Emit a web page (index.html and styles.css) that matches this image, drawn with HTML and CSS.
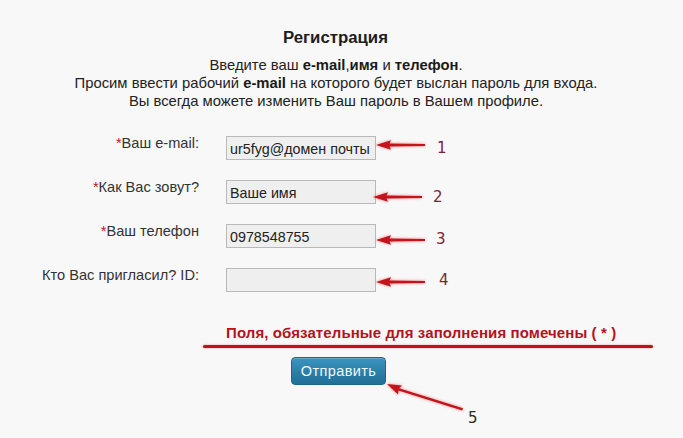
FILE: index.html
```html
<!DOCTYPE html>
<html lang="ru">
<head>
<meta charset="utf-8">
<title>Регистрация</title>
<link rel="stylesheet" href="styles.css">
</head>
<body>
<div class="page">
  <h1 class="title">Регистрация</h1>
  <p class="intro">Введите ваш <b>e-mail</b>,<b>имя</b> и <b>телефон</b>.<br>
  Просим ввести рабочий <b>e-mail</b> на которого будет выслан пароль для входа.<br>
  Вы всегда можете изменить Ваш пароль в Вашем профиле.</p>

  <form class="form">
    <div class="row">
      <label class="lbl"><span class="req">*</span>Ваш e-mail:</label>
      <input class="field" type="text" value="ur5fyg@домен почты">
      <div class="note n1">
        <svg class="arrow" viewBox="0 0 50 12" width="50" height="12"><path d="M0 6 L15 1.2 L13.5 4.6 L49 4.9 L49 7.1 L13.5 7.4 L15 10.8 Z"/></svg>
        <span class="num">1</span>
      </div>
    </div>
    <div class="row">
      <label class="lbl"><span class="req">*</span>Как Вас зовут?</label>
      <input class="field" type="text" value="Ваше имя">
      <div class="note n2">
        <svg class="arrow" viewBox="0 0 50 12" width="50" height="12"><path d="M0 6 L15 1.2 L13.5 4.6 L49 4.9 L49 7.1 L13.5 7.4 L15 10.8 Z"/></svg>
        <span class="num">2</span>
      </div>
    </div>
    <div class="row">
      <label class="lbl"><span class="req">*</span>Ваш телефон</label>
      <input class="field" type="text" value="0978548755">
      <div class="note n3">
        <svg class="arrow" viewBox="0 0 50 12" width="50" height="12"><path d="M0 6 L15 1.2 L13.5 4.6 L49 4.9 L49 7.1 L13.5 7.4 L15 10.8 Z"/></svg>
        <span class="num">3</span>
      </div>
    </div>
    <div class="row">
      <label class="lbl">Кто Вас пригласил? ID:</label>
      <input class="field" type="text" value="">
      <div class="note n4">
        <svg class="arrow" viewBox="0 0 50 12" width="50" height="12"><path d="M0 6 L15 1.2 L13.5 4.6 L49 4.9 L49 7.1 L13.5 7.4 L15 10.8 Z"/></svg>
        <span class="num">4</span>
      </div>
    </div>
  </form>

  <p class="required">Поля, обязательные для заполнения помечены ( * )</p>
  <div class="rule"></div>

  <div class="submit-row">
    <button class="btn" type="button">Отправить</button>
    <div class="pointer">
      <svg class="arrow5" viewBox="0 0 80 30" width="80" height="30"><path d="M0 1 L15 2.5 L12.2 5.3 L76 25.2 L75.2 27.4 L11.4 7.6 L11 11.4 Z"/></svg>
      <span class="num num5">5</span>
    </div>
  </div>
</div>
</body>
</html>
```

FILE: styles.css
```css
html, body {
  margin: 0;
  padding: 0;
}

body {
  background: #f8f8f8;
  font-family: "Liberation Sans", Arial, sans-serif;
  color: #222;
  width: 683px;
  height: 438px;
  overflow: hidden;
}

.page {
  padding-top: 28px;
}

.title {
  margin: 0;
  padding-right: 12px;
  font-size: 16.8px;
  line-height: 20px;
  font-weight: bold;
  text-align: center;
  color: #1e1e1e;
}

.intro {
  margin: 8px 0 0;
  padding-right: 11px;
  font-size: 14.8px;
  line-height: 18px;
  text-align: center;
  color: #222;
}

.intro b {
  color: #1a1a1a;
}

.form {
  margin: 26px 0 0;
  display: grid;
  row-gap: 20px;
}

.row {
  display: grid;
  grid-template-columns: 226px 150px auto;
  height: 24px;
}

.lbl {
  align-self: start;
  margin-top: -1px;
  padding-right: 27px;
  text-align: right;
  font-size: 14.6px;
  line-height: 16px;
  color: #333;
  white-space: nowrap;
}

.req {
  color: #c0141c;
}

.field {
  box-sizing: border-box;
  width: 150px;
  height: 24px;
  margin: 0;
  padding: 2px 3px 0;
  border: 1px solid #b9b9b9;
  background: #efefef;
  font-family: "Liberation Sans", Arial, sans-serif;
  font-size: 14.3px;
  color: #222;
  outline: none;
}

.note {
  display: flex;
  align-items: flex-start;
}

.arrow {
  display: block;
  fill: #c3141c;
  filter: drop-shadow(0 0 1.5px rgba(230, 30, 30, 0.55));
}

.num {
  font-family: "DejaVu Sans", "Liberation Sans", sans-serif;
  font-size: 15px;
  line-height: 16px;
  color: #7a2436;
  margin-left: 14px;
}

.n1 .arrow { margin-top: 3px; }
.n1 .num { margin-top: 4px; margin-left: 11px; }
.n2 .arrow { margin-top: 11px; margin-left: -3px; }
.n2 .num { margin-top: 9px; margin-left: 10px; }
.n3 .arrow { margin-top: 10px; }
.n3 .num { margin-top: 7px; margin-left: 10px; }
.n4 .arrow { margin-top: 8px; }
.n4 .num { margin-top: 4px; margin-left: 13px; }

.required {
  margin: 33px 0 0 226px;
  font-size: 15px;
  line-height: 16px;
  font-weight: bold;
  color: #b4121c;
  white-space: nowrap;
  letter-spacing: 0.1px;
}

.rule {
  margin: 4px 0 0 203px;
  width: 450px;
  height: 3px;
  border-radius: 2px;
  background: #c0141c;
  box-shadow: 0 0 2px rgba(220, 30, 30, 0.5);
}

.submit-row {
  position: relative;
  margin-top: 9px;
  padding-left: 291px;
}

.btn {
  display: block;
  box-sizing: border-box;
  width: 95px;
  height: 28px;
  margin: 0;
  padding: 0;
  border: 1px solid #1f6688;
  border-radius: 4px;
  background: linear-gradient(#3b95c1, #2b7ea8 55%, #236f96);
  box-shadow: inset 0 1px 0 rgba(255, 255, 255, 0.2);
  font-family: "Liberation Sans", Arial, sans-serif;
  font-size: 14.5px;
  color: #f2f8fb;
  letter-spacing: 0.4px;
}

.pointer {
  position: absolute;
  left: 387px;
  top: 26px;
  width: 100px;
  height: 50px;
}

.arrow5 {
  display: block;
  fill: #c3141c;
  filter: drop-shadow(0 0 1.5px rgba(230, 30, 30, 0.55));
}

.num5 {
  position: absolute;
  left: 81px;
  top: 27px;
  margin: 0;
  color: #2a2a2a;
}
```
